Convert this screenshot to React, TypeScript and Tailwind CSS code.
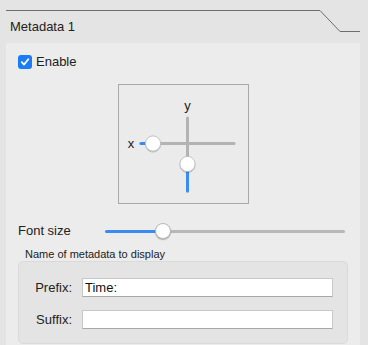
const font = { fontFamily: '"Liberation Sans", Arial, sans-serif' };

const BLUE = "#3b8cf2";
const TRACK = "#b3b3b3";

function Knob() {
  return (
    <span className="h-4 w-4 shrink-0 rounded-full border border-[#b8b8b8] bg-white shadow-[0_1px_1px_rgba(0,0,0,0.25)]" />
  );
}

// 2D position pad, drawn as one picture
function XYPad() {
  return (
    <div className="mx-auto mt-[15px] h-[120px] w-[131px] border border-[#a9a9a9] bg-[#ebebeb]">
      <svg width="129" height="118" viewBox="0 0 129 118" aria-hidden>
        <defs>
          <filter id="ks" x="-50%" y="-50%" width="200%" height="200%">
            <feDropShadow dx="0" dy="0.8" stdDeviation="0.6" floodOpacity="0.3" />
          </filter>
        </defs>
        <text x="68.5" y="25" textAnchor="middle" fontSize="13" fill="#222" style={font}>y</text>
        <text x="12" y="63" textAnchor="middle" fontSize="13" fill="#222" style={font}>x</text>
        <line x1="68.5" y1="33" x2="68.5" y2="106" stroke={TRACK} strokeWidth="3" strokeLinecap="round" />
        <line x1="68.5" y1="80" x2="68.5" y2="106" stroke={BLUE} strokeWidth="3" strokeLinecap="round" />
        <line x1="22" y1="58.5" x2="115" y2="58.5" stroke={TRACK} strokeWidth="3" strokeLinecap="round" />
        <line x1="22" y1="58.5" x2="33" y2="58.5" stroke={BLUE} strokeWidth="3" strokeLinecap="round" />
        <circle cx="34" cy="58.5" r="7.6" fill="white" stroke="#b8b8b8" strokeWidth="0.8" filter="url(#ks)" />
        <circle cx="68.5" cy="79" r="7.6" fill="white" stroke="#b8b8b8" strokeWidth="0.8" filter="url(#ks)" />
      </svg>
    </div>
  );
}

function Slider() {
  return (
    <div className="flex h-4 w-[240px] items-center">
      <span className="h-[3px] w-[52px] rounded-l-full bg-[#3b8cf2]" />
      <span className="-ml-[2px] -mr-[2px] z-10 flex">
        <Knob />
      </span>
      <span className="h-[3px] flex-1 rounded-r-full bg-[#b8b8b8]" />
    </div>
  );
}

function Field({ label, value }: { label: string; value: string }) {
  return (
    <div className="flex items-center">
      <span className="w-[54px] pr-[1px] text-right text-[13px] text-[#222]">{label}</span>
      <div className="ml-[9px] flex h-[19px] w-[251px] items-center border border-[#c8c8c8] border-b-[#a8a8a8] bg-white px-[2px] text-[13px] text-[#111]">
        {value}
      </div>
    </div>
  );
}

export default function App() {
  return (
    <div style={font} className="h-[345px] w-[368px] overflow-hidden bg-[#e4e4e4] text-[#222]">
      <div className="relative h-[43px] pl-[10px] pt-[14px]">
        <svg className="absolute left-0 top-0" width="368" height="43" aria-hidden>
          <polyline
            points="6,10.5 320,10.5 340,31.5 360,31.5"
            fill="none"
            stroke="#6e6e6e"
            strokeWidth="1"
          />
        </svg>
        <span className="relative text-[13px] leading-4">Metadata 1</span>
      </div>

      <div className="ml-[6px] h-[302px] w-[354px] bg-[#ececec] pt-[12px]">
        <label className="flex items-center pl-[12px]">
          <span className="flex h-[14px] w-[14px] items-center justify-center rounded-[3px] bg-[#1b7cf6]">
            <svg width="10" height="10" viewBox="0 0 10 10" aria-hidden>
              <path d="M1.8 5.2 L4 7.6 L8.3 2.2" fill="none" stroke="white" strokeWidth="1.8" strokeLinecap="round" strokeLinejoin="round" />
            </svg>
          </span>
          <span className="ml-[4px] text-[13px] leading-[14px]">Enable</span>
        </label>

        <XYPad />

        <div className="mt-[19px] flex h-4 items-center pl-[12px]">
          <span className="w-[87px] text-[13px]">Font size</span>
          <Slider />
        </div>

        <div className="mt-[9px] pl-[19px] text-[11px] leading-[13px]">Name of metadata to display</div>

        <div className="ml-[12px] w-[330px] rounded-[5px] border border-[#dadada] bg-[#e4e4e4] pb-[14px] pt-[16px]">
          <div className="flex flex-col gap-[12px]">
            <Field label="Prefix:" value="Time:" />
            <Field label="Suffix:" value="" />
          </div>
        </div>
      </div>
    </div>
  );
}
